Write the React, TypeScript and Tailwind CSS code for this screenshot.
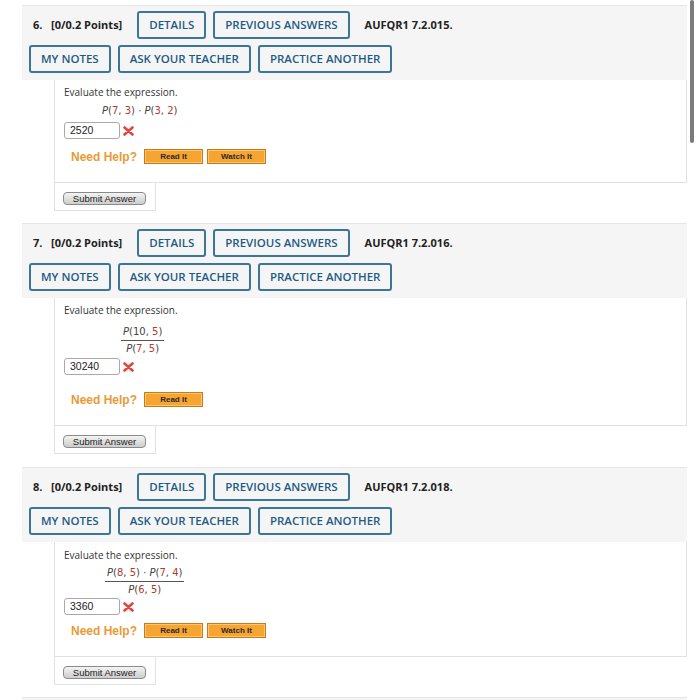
import React from "react";

const R = ({ children }: { children: React.ReactNode }) => (
  <span className="text-[#b4392f]">{children}</span>
);
const P = () => <i>P</i>;

function OutlineBtn({ label }: { label: string }) {
  return (
    <div className="flex h-[28px] items-center rounded-[3px] border-2 border-[#3b7598] px-[10px] text-[11.5px] font-semibold text-[#1d5b86]">
      {label}
    </div>
  );
}

function Header({ num, code }: { num: number; code: string }) {
  return (
    <div className="flex flex-col gap-[6px] border-t border-[#e6e6e6] bg-[#f5f5f5] pb-[7px] pl-[7px] pt-[5px] font-['Open_Sans',sans-serif]">
      <div className="ml-[4px] flex h-[28px] items-center text-[11px] font-bold text-[#222]">
        <span className="w-[18px]">{num}.</span>
        <span>[0/0.2 Points]</span>
        <div className="ml-[15px] flex gap-[7px]">
          <OutlineBtn label="DETAILS" />
          <OutlineBtn label="PREVIOUS ANSWERS" />
        </div>
        <span className="ml-[15px]">{code}</span>
      </div>
      <div className="flex h-[28px] gap-[7px]">
        <OutlineBtn label="MY NOTES" />
        <OutlineBtn label="ASK YOUR TEACHER" />
        <OutlineBtn label="PRACTICE ANOTHER" />
      </div>
    </div>
  );
}

function AnswerRow({ value, className }: { value: string; className: string }) {
  return (
    <div className={`flex items-center ${className}`}>
      <div className="flex h-[17px] w-[56px] items-center rounded-[3px] border border-[#a9a9a9] pl-[5px] font-['Liberation_Sans',sans-serif] text-[10.5px] text-[#222]">
        {value}
      </div>
      <svg className="ml-[3px]" width="11" height="10" viewBox="0 0 11 10">
        <path d="M1.5 1.5 L9.5 8.5 M9.5 1.5 L1.5 8.5" stroke="#e0463e" strokeWidth="2.6" strokeLinecap="round" />
      </svg>
    </div>
  );
}

function OrangeBtn({ label }: { label: string }) {
  return (
    <div className="flex h-[15px] w-[59px] items-center justify-center border border-[#c67b1e] bg-[#f7a532] font-['Liberation_Sans',sans-serif] text-[8px] font-bold text-[#2a2a2a] shadow-[inset_0_0_0_1px_#fcc56a]">
      {label}
    </div>
  );
}

function HelpRow({ watch, className }: { watch?: boolean; className: string }) {
  return (
    <div className={`flex h-[15px] items-center ${className}`}>
      <span className="ml-[7px] font-['Liberation_Sans',sans-serif] text-[12px] font-bold text-[#ea9a36]">
        Need Help?
      </span>
      <div className="ml-[7px] flex gap-[4px]">
        <OrangeBtn label="Read It" />
        {watch && <OrangeBtn label="Watch It" />}
      </div>
    </div>
  );
}

function Submit() {
  return (
    <div className="ml-[32px] h-[28px] w-[102px] border-x border-b border-[#e2e2e2] pl-[8px] pt-[9px]">
      <div className="flex h-[13px] w-[83px] items-center justify-center rounded-[4px] border border-[#8a8a8a] bg-gradient-to-b from-[#f4f4f4] to-[#cdcdcd] font-['Liberation_Sans',sans-serif] text-[9.5px] leading-none text-[#222]">
        Submit Answer
      </div>
    </div>
  );
}

const math = "font-['DejaVu_Sans',sans-serif] text-[10px] leading-[13px] text-[#444]";
const lead = "h-[13px] font-['Open_Sans',sans-serif] text-[10px] leading-[13px] text-[#333]";

export default function App() {
  return (
    <div className="relative h-[700px] overflow-hidden bg-white">
      <div className="ml-[22px] w-[665px] pt-[5px]">
        {/* Question 6 */}
        <Header num={6} code="AUFQR1 7.2.015." />
        <div className="ml-[32px] border-x border-b border-[#e2e2e2] pb-[18px] pl-[9px] pt-[6px]">
          <p className={lead}>Evaluate the expression.</p>
          <div className={`mt-[5px] ml-[38px] h-[13px] ${math}`}>
            <P />(<R>7</R>, <R>3</R>) · <P />(<R>3</R>, <R>2</R>)
          </div>
          <AnswerRow value="2520" className="mt-[5px]" />
          <HelpRow watch className="mt-[10px]" />
        </div>
        <Submit />

        {/* Question 7 */}
        <div className="mt-[12px]">
          <Header num={7} code="AUFQR1 7.2.016." />
        </div>
        <div className="ml-[32px] border-x border-b border-[#e2e2e2] pb-[18px] pl-[9px] pt-[6px]">
          <p className={lead}>Evaluate the expression.</p>
          <div className={`mt-[8px] ml-[57px] flex w-fit flex-col items-center ${math}`}>
            <div className="border-b border-[#555] px-[2px] pb-[2px]">
              <P />(10, <R>5</R>)
            </div>
            <div className="pt-[1px]">
              <P />(<R>7</R>, <R>5</R>)
            </div>
          </div>
          <AnswerRow value="30240" className="mt-[3px]" />
          <HelpRow className="mt-[17px]" />
        </div>
        <Submit />

        {/* Question 8 */}
        <div className="mt-[13px]">
          <Header num={8} code="AUFQR1 7.2.018." />
        </div>
        <div className="ml-[32px] border-x border-b border-[#e2e2e2] pb-[18px] pl-[9px] pt-[7px]">
          <p className={lead}>Evaluate the expression.</p>
          <div className={`mt-[4px] ml-[41px] flex w-fit flex-col items-center ${math}`}>
            <div className="border-b border-[#555] px-[2px] pb-[2px]">
              <P />(<R>8</R>, <R>5</R>) · <P />(<R>7</R>, <R>4</R>)
            </div>
            <div className="pt-[1px]">
              <P />(<R>6</R>, <R>5</R>)
            </div>
          </div>
          <AnswerRow value="3360" className="mt-[2px]" />
          <HelpRow watch className="mt-[8px]" />
        </div>
        <Submit />

        <div className="mt-[12px] h-[20px] border-t border-[#e6e6e6] bg-[#f5f5f5]" />
      </div>

      {/* scrollbar thumb */}
      <div className="absolute left-[690px] top-0 h-[143px] w-[4px] rounded-full bg-[#7b7b7b]" />
    </div>
  );
}
